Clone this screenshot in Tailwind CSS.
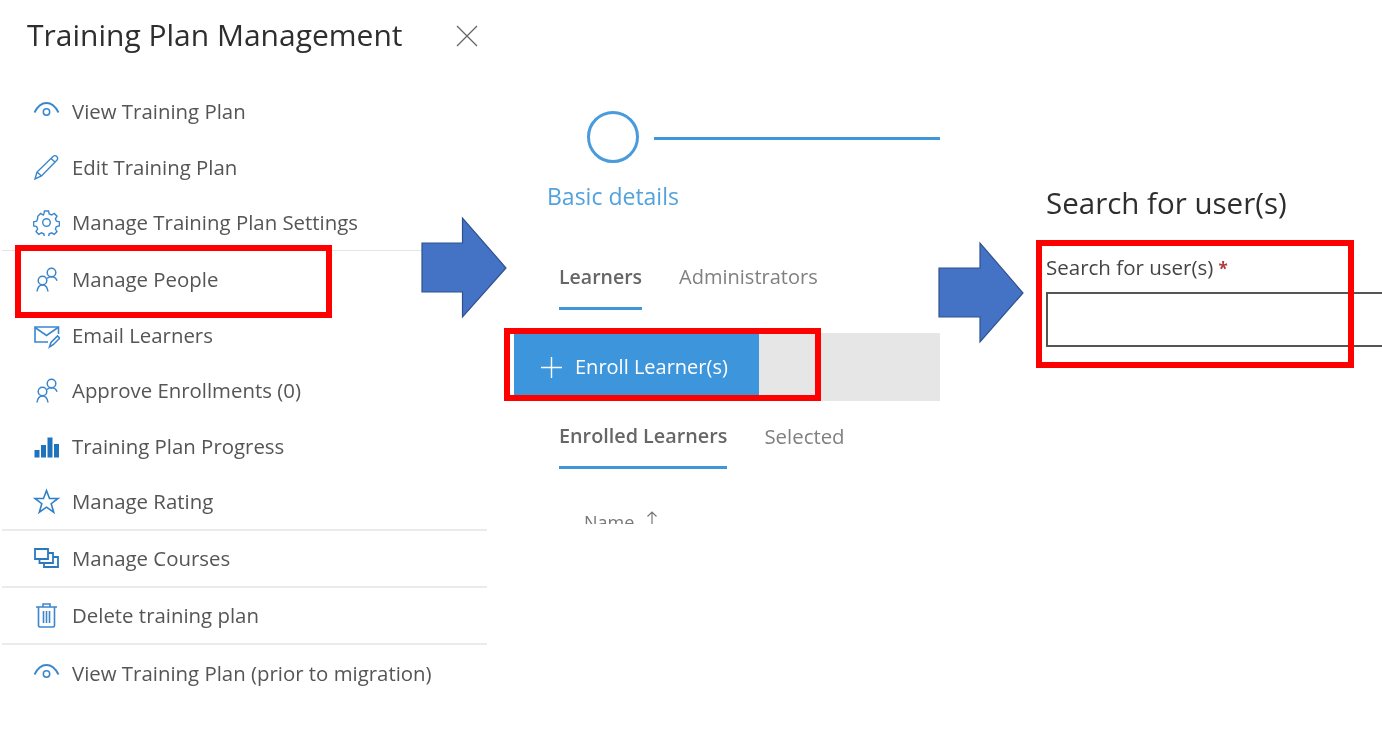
<!DOCTYPE html>
<html lang="en">
<head>
    <meta charset="UTF-8">
    <title>Training Plan Management</title>
    <script src="https://cdn.jsdelivr.net/npm/@tailwindcss/browser@4"></script>
</head>
<body class="bg-white font-['Open_Sans','Noto_Sans',sans-serif] overflow-hidden">
    <div class="relative w-[1382px] h-[733px] overflow-hidden flex">

        <!-- left panel -->
        <div class="w-[487px] shrink-0 blur-[0.4px]">
            <div class="h-[84px] pl-[27px] pr-[9px] pt-[14px] flex items-start justify-between">
                <h1 class="text-[30px] leading-[42px] text-[#2e2e2e]">Training Plan Management</h1>
                <svg class="w-[22px] h-[22px] mt-[11px]" viewBox="0 0 22 22" fill="none" stroke="#666" stroke-width="1.3"><path d="M1 1l20 20M21 1L1 21"/></svg>
            </div>
            <ul class="ml-[2px] text-[20.4px] text-[#555]">
                <li class="h-[55.5px] pl-[31px] flex items-center gap-[12px]">
                    <svg class="w-[27px] h-[27px] shrink-0" viewBox="0 0 27 27" fill="none" stroke="#3a86cc" stroke-width="1.8"><path d="M1.500 14.500C5 7.500 9 5 13.500 5S22 7.500 25.500 14.500"/><circle cx="13.500" cy="14" r="3.200" stroke-width="1.500"/></svg>
                    View Training Plan
                </li>
                <li class="h-[55.5px] pl-[31px] flex items-center gap-[12px]">
                    <svg class="w-[27px] h-[27px] shrink-0" viewBox="0 0 27 27" fill="none" stroke="#3a86cc" stroke-width="1.4"><path d="M2 25l2-7L20 2.500c1.200-1 2.800-1 3.800 0s1 2.600 0 3.800L8.500 22zM4 18l4.500 4M18 4.500l4.500 4"/></svg>
                    Edit Training Plan
                </li>
                <li class="h-[56px] pl-[31px] flex items-center gap-[12px] border-b border-[#e4e4e4]">
                    <svg class="w-[27px] h-[27px] shrink-0" viewBox="0 0 27 27" fill="none" stroke="#3a86cc" stroke-width="1.4"><circle cx="13.500" cy="13.500" r="3.800"/><path d="M11.500 2h4l.7 3 2.400 1 2.600-1.600 2.800 2.800-1.600 2.600 1 2.400 3 .7v4l-3 .7-1 2.400 1.600 2.600-2.800 2.800-2.600-1.600-2.400 1-.7 3h-4l-.7-3-2.400-1-2.600 1.600-2.800-2.800 1.600-2.600-1-2.400-3-.7v-4l3-.7 1-2.400L4.800 7.200l2.800-2.800L10.200 6l.6-1z"/></svg>
                    Manage Training Plan Settings
                </li>
                <li class="h-[56.5px] pl-[31px] flex items-center gap-[12px]">
                    <svg class="w-[27px] h-[27px] shrink-0" viewBox="0 0 27 27" fill="none" stroke="#3a86cc" stroke-width="1.5"><circle cx="9.500" cy="14.500" r="4.300"/><path d="M4 25.500c.5-3.500 2.500-6.500 5.500-6.500s5 3 5.500 6.500"/><circle cx="18.500" cy="6.500" r="4.300"/><path d="M14 12.500c1-1 2.800-1.700 4.500-1.700 2.600 0 4.700 1.600 5.500 4"/></svg>
                    Manage People
                </li>
                <li class="h-[55.5px] pl-[31px] flex items-center gap-[12px]">
                    <svg class="w-[27px] h-[27px] shrink-0" viewBox="0 0 27 27" fill="none" stroke="#3a86cc" stroke-width="1.6"><path d="M15 20H2V5h23.500v7"/><path d="M2 5.500l11.500 8 11.500-8"/><path d="M16.500 25l1.500-4.500 6.500-6.500 2.200 2.200-6.500 6.500z"/></svg>
                    Email Learners
                </li>
                <li class="h-[55.5px] pl-[31px] flex items-center gap-[12px]">
                    <svg class="w-[27px] h-[27px] shrink-0" viewBox="0 0 27 27" fill="none" stroke="#3a86cc" stroke-width="1.5"><circle cx="9.500" cy="14.500" r="4.300"/><path d="M4 25.500c.5-3.500 2.500-6.500 5.500-6.500s5 3 5.500 6.500"/><circle cx="18.500" cy="6.500" r="4.300"/><path d="M14 12.500c1-1 2.800-1.700 4.500-1.700 2.600 0 4.700 1.600 5.500 4"/></svg>
                    Approve Enrollments (0)
                </li>
                <li class="h-[55.5px] pl-[31px] flex items-center gap-[12px]">
                    <svg class="w-[27px] h-[27px] shrink-0" viewBox="0 0 27 27" fill="#1f73bd"><path d="M1.500 17h5v7.500h-5zM8 12h5v12.500H8zM14.500 4.500h5v20h-5zM21 11h5v13.500h-5z"/></svg>
                    Training Plan Progress
                </li>
                <li class="h-[56.5px] pl-[31px] flex items-center gap-[12px] border-b-2 border-[#ebebeb]">
                    <svg class="w-[27px] h-[27px] shrink-0" viewBox="0 0 27 27" fill="none" stroke="#2f80c8" stroke-width="1.6"><path d="M13.500 2.500l3 8h8.500l-6.800 5.200 2.500 8.500-7.200-5-7.200 5 2.500-8.500L2 10.500h8.500z"/></svg>
                    Manage Rating
                </li>
                <li class="h-[57px] pl-[31px] flex items-center gap-[12px] border-b-2 border-[#ebebeb]">
                    <svg class="w-[27px] h-[27px] shrink-0" viewBox="0 0 27 27" fill="none" stroke="#2a78c0" stroke-width="1.800"><path d="M2 4h13v10H2zM6.500 14v4H20V8h-5M11 18v4h14V12h-5"/></svg>
                    Manage Courses
                </li>
                <li class="h-[57px] pl-[31px] flex items-center gap-[12px] border-b-2 border-[#ebebeb]">
                    <svg class="w-[27px] h-[27px] shrink-0" viewBox="0 0 27 27" fill="none" stroke="#3a86cc" stroke-width="1.6"><path d="M3 5h21M5.500 5v18.500q0 1.500 1.500 1.500h13q1.500 0 1.500-1.500V5M10 5V2h7v3M10.500 9v12M13.500 9v12M16.500 9v12"/></svg>
                    Delete training plan
                </li>
                <li class="h-[57px] pl-[31px] flex items-center gap-[12px]">
                    <svg class="w-[27px] h-[27px] shrink-0" viewBox="0 0 27 27" fill="none" stroke="#3a86cc" stroke-width="1.8"><path d="M1.500 14.500C5 7.500 9 5 13.500 5S22 7.500 25.500 14.500"/><circle cx="13.500" cy="14" r="3.200" stroke-width="1.500"/></svg>
                    View Training Plan (prior to migration)
                </li>
            </ul>
        </div>

        <!-- middle panel -->
        <div class="ml-[27px] w-[426px] shrink-0 blur-[0.4px]">
            <div class="pt-[111px] h-[163px] flex items-start">
                <div class="ml-[73px] w-[52px] h-[52px] rounded-full border-[3px] border-[#4a9bdc]"></div>
                <div class="ml-[15px] mt-[26px] flex-1 h-[3px] bg-[#3f97da]"></div>
            </div>
            <div class="ml-[33px] h-[66px] text-[23px] leading-[66px] text-[#52a2dc]">Basic details</div>
            <div class="mt-[33px] ml-[45px] flex gap-[37px] leading-[30px] h-[71px]">
                <div class="h-[48px] border-b-[3px] border-[#3f97da] text-[#666] font-semibold text-[19.500px]">Learners</div>
                <div class="text-[#808080] text-[20px]">Administrators</div>
            </div>
            <div class="h-[68px] bg-[#e6e6e6] flex">
                <div class="w-[245px] bg-[#3d96dc] text-white flex items-center pl-[27px] gap-[13px] text-[20px]">
                    <svg class="w-[21px] h-[21px]" viewBox="0 0 21 21" fill="none" stroke="#fff" stroke-width="1.400"><path d="M10.500 0v21M0 10.500h21"/></svg>
                    Enroll Learner(s)
                </div>
            </div>
            <div class="ml-[45px] mt-[20px] flex gap-[37px] leading-[30px]">
                <div class="h-[48px] border-b-[3px] border-[#3f97da] text-[#666] font-semibold text-[19.800px]">Enrolled Learners</div>
                <div class="text-[#808080] text-[20.400px]">Selected</div>
            </div>
            <div class="ml-[70px] mt-[41px] h-[14px] overflow-hidden flex items-start text-[18px] leading-[24px] text-[#777]">
                Name
                <svg class="ml-[12px] mt-[1px] w-[12px] h-[14px]" viewBox="0 0 12 14" fill="none" stroke="#777" stroke-width="1.200"><path d="M6 14V1M1.500 5.500L6 1l4.500 4.500"/></svg>
            </div>
        </div>

        <!-- right panel -->
        <div class="ml-[106px] w-[400px] shrink-0 pt-[183px] blur-[0.4px]">
            <h2 class="text-[29.500px] leading-[40px] text-[#2e2e2e]">Search for user(s)</h2>
            <label class="block mt-[30px] font-medium text-[20.500px] leading-[28px] text-[#444]">Search for user(s) <span class="text-[#b03a3a] font-bold text-[17px]">*</span></label>
            <div class="mt-[9px] h-[55px] border-2 border-[#555]"></div>
        </div>

        <!-- annotations drawn over the slide -->
        <div class="absolute left-[15px] top-[245px] w-[317px] h-[73px] border-[6px] border-[#ff0000]"></div>
        <div class="absolute left-[504px] top-[328px] w-[317px] h-[73px] border-[6px] border-[#ff0000]"></div>
        <div class="absolute left-[1036px] top-[240px] w-[318px] h-[128px] border-[6px] border-[#ff0000]"></div>

        <svg class="absolute left-[420px] top-[216px]" width="90" height="104" viewBox="0 0 90 104"><path d="M2 27h40.500V2L86 52 42.500 101V76H2z" fill="#4472c4" stroke="#2f528f" stroke-width="1.200"/></svg>
        <svg class="absolute left-[937px] top-[241px]" width="90" height="104" viewBox="0 0 90 104"><path d="M2 27h41V2L86 52 43 101V76H2z" fill="#4472c4" stroke="#2f528f" stroke-width="1.200"/></svg>
    </div>
</body>
</html>
